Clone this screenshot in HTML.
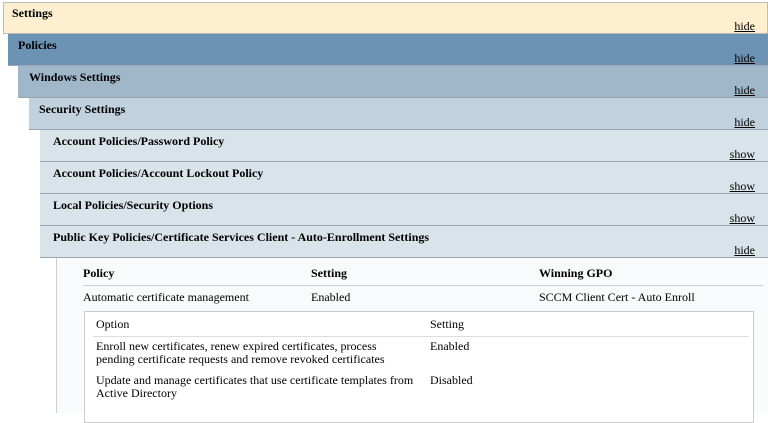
<html><head><style>
body{margin:0;width:768px;height:413px;overflow:hidden;background:#fff;font-family:"Liberation Serif",serif;font-size:12px;color:#000;position:relative}
.b{position:absolute;right:0;height:31px;border-bottom:1px solid #9aa7b3;box-sizing:border-box}
.b b{position:absolute;top:4px;font-size:12px}
.b a{position:absolute;right:13px;top:17px;color:#000;text-decoration:underline;font-size:12px}
.t{position:absolute}
</style></head><body>
<div class="b" style="left:3px;top:2px;height:32px;background:#fdefd0;border:1px solid #bbb"><b style="left:8px;top:3px">Settings</b><a style="top:16px;right:12px">hide</a></div>
<div class="b" style="left:8px;top:34px;height:32px;background:#6c93b4"><b style="left:10px">Policies</b><a>hide</a></div>
<div class="b" style="left:18px;top:66px;height:32px;background:#a0b7ca"><b style="left:11px">Windows Settings</b><a>hide</a></div>
<div class="b" style="left:29px;top:98px;height:32px;background:#c1d1de"><b style="left:10px">Security Settings</b><a>hide</a></div>
<div class="b" style="left:40px;top:130px;height:32px;background:#d9e3ea"><b style="left:13px">Account Policies/Password Policy</b><a>show</a></div>
<div class="b" style="left:40px;top:162px;height:32px;background:#d9e3ea"><b style="left:13px">Account Policies/Account Lockout Policy</b><a>show</a></div>
<div class="b" style="left:40px;top:194px;height:32px;background:#d9e3ea"><b style="left:13px">Local Policies/Security Options</b><a>show</a></div>
<div class="b" style="left:40px;top:226px;height:32px;background:#d9e3ea"><b style="left:13px">Public Key Policies/Certificate Services Client - Auto-Enrollment Settings</b><a>hide</a></div>
<div style="position:absolute;left:56px;top:258px;right:0;bottom:0;background:#f9fafb;border-left:1px solid #c8cfd6"></div>
<b class="t" style="left:83px;top:266px">Policy</b>
<b class="t" style="left:311px;top:266px">Setting</b>
<b class="t" style="left:539px;top:266px">Winning GPO</b>
<div class="t" style="left:83px;top:285px;width:680px;border-top:1px solid #ccc"></div>
<div class="t" style="left:83px;top:290px">Automatic certificate management</div>
<div class="t" style="left:311px;top:290px">Enabled</div>
<div class="t" style="left:539px;top:290px">SCCM Client Cert - Auto Enroll</div>
<div class="t" style="left:84px;top:311px;width:668px;height:110px;background:#fff;border:1px solid #ccc"></div>
<div class="t" style="left:96px;top:317px">Option</div>
<div class="t" style="left:430px;top:317px">Setting</div>
<div class="t" style="left:93px;top:336px;width:656px;border-top:1px solid #ddd"></div>
<div class="t" style="left:96px;top:340px;line-height:13px">Enroll new certificates, renew expired certificates, process<br>pending certificate requests and remove revoked certificates</div>
<div class="t" style="left:430px;top:340px;line-height:13px">Enabled</div>
<div class="t" style="left:96px;top:374px;line-height:13px">Update and manage certificates that use certificate templates from<br>Active Directory</div>
<div class="t" style="left:430px;top:374px;line-height:13px">Disabled</div>
</body></html>
